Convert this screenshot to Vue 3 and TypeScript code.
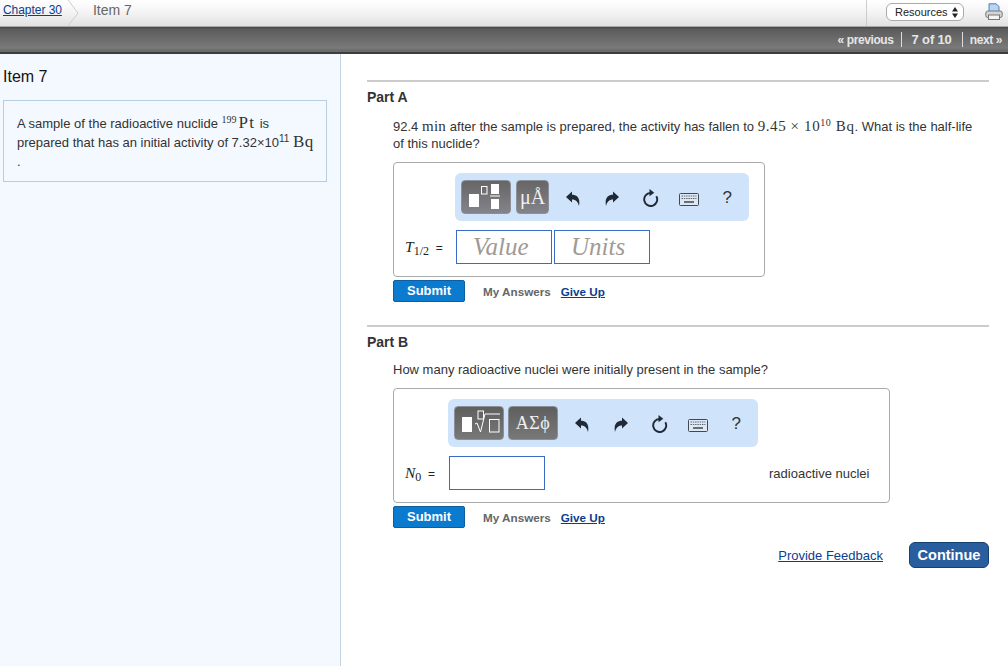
<script setup lang="ts">
const undoPath = 'M0 6 L6 0.5 V3.8 C11 3.8 14.5 7 13 15 C12 11 10 8.5 6 8.5 V11.5 Z'
const redoPath = 'M14 6 L8 0.5 V3.8 C3 3.8 -0.5 7 1 15 C2 11 4 8.5 8 8.5 V11.5 Z'
</script>

<template>
  <div class="page">
    <header class="topbar">
      <nav class="crumbs">
        <a class="chapter" href="#">Chapter 30</a>
        <svg class="chevron" width="13" height="27" viewBox="0 0 13 27"><path d="M1 0 L11 13 L1 26" fill="none" stroke="#cfcfcf" /></svg>
        <span class="crumb-item">Item 7</span>
      </nav>
      <div class="tools">
        <div class="select">
          <span>Resources</span>
          <svg width="6" height="11" viewBox="0 0 6 11"><path d="M3 0 L6 4.5 H0 Z M3 11 L0 6.5 H6 Z" fill="#222" /></svg>
        </div>
        <svg class="printer" width="18" height="18" viewBox="0 0 18 18">
          <path d="M4 9 V0.8 H11 L14 3.5 V9 Z" fill="#b9d4f5" stroke="#4f80ba" />
          <rect x="0.8" y="8" width="16.4" height="6.5" rx="2" fill="#d4d4d4" stroke="#777" />
          <rect x="3.5" y="12" width="11" height="4.5" fill="#f4f4f4" stroke="#777" />
        </svg>
      </div>
    </header>

    <div class="darkbar">
      <span>« previous</span>
      <i class="pipe"></i>
      <span class="count">7 of 10</span>
      <i class="pipe"></i>
      <span>next »</span>
    </div>

    <div class="body">
      <aside class="sidebar">
        <h1>Item 7</h1>
        <div class="intro">
          A sample of the radioactive nuclide <sup class="iso">199</sup><span class="m big pt">Pt</span> is<br />
          prepared that has an initial activity of 7.32×10<sup class="exp">11</sup> <span class="m big">Bq</span><br />
          .
        </div>
      </aside>

      <main class="content">
        <section class="part part-a">
          <h2>Part A</h2>
          <p class="q">
            92.4 <span class="m">min</span> after the sample is prepared, the activity has fallen to
            <span class="m wide-math">9.45 × 10<sup class="mexp">10</sup> Bq</span>. What is the half-life of this nuclide?
          </p>
          <div class="answer answer-a">
            <div class="toolbar tb-a">
              <div class="tb-btn wide">
                <svg width="48" height="32" viewBox="0 0 48 32">
                  <rect x="7" y="13" width="10" height="13" fill="#fff" />
                  <rect x="19.5" y="5.5" width="5.5" height="7.5" fill="none" stroke="#fff" />
                  <rect x="29" y="3" width="8" height="10" fill="#fff" />
                  <rect x="28" y="14.5" width="10" height="1" fill="#fff" />
                  <rect x="29" y="18" width="8" height="10" fill="#fff" />
                </svg>
              </div>
              <div class="tb-btn narrow glyph">μÅ</div>
              <div class="icons">
                <svg class="ico" width="14" height="15" viewBox="0 0 14 15"><path :d="undoPath" fill="#1f2a36" /></svg>
                <svg class="ico" width="14" height="15" viewBox="0 0 14 15"><path :d="redoPath" fill="#1f2a36" /></svg>
                <svg class="ico" width="17" height="18" viewBox="0 0 17 18">
                  <path d="M8.5 4 A6.5 6.5 0 1 0 14.3 7.2" fill="none" stroke="#1f2a36" stroke-width="1.9" />
                  <path d="M7.5 0 L12.3 3.8 L7.5 7.2 Z" fill="#1f2a36" />
                </svg>
                <svg class="ico kbd" width="20" height="13" viewBox="0 0 20 13">
                  <rect x="0.5" y="0.5" width="19" height="12" rx="1" fill="#dfe8f2" stroke="#3d4955" />
                  <path d="M2.5 3 H17.5 M2.5 5.5 H17.5" stroke="#5f6b79" stroke-dasharray="1.5 .8" />
                  <path d="M5 9 H15" stroke="#3d4955" stroke-width="1.5" />
                </svg>
                <span class="help">?</span>
              </div>
            </div>
            <div class="row row-a">
              <span class="label"><span class="var">T</span><sub>1/2</sub> <b>=</b></span>
              <div class="input ph first"><em>Value</em></div>
              <div class="input ph gap2"><em>Units</em></div>
            </div>
          </div>
          <div class="actions">
            <button class="submit" type="button">Submit</button>
            <span class="mine">My Answers</span>
            <a class="giveup" href="#">Give Up</a>
          </div>
        </section>

        <section class="part part-b">
          <h2>Part B</h2>
          <p class="q qb">How many radioactive nuclei were initially present in the sample?</p>
          <div class="answer answer-b">
            <div class="toolbar tb-b">
              <div class="tb-btn wide">
                <svg width="48" height="32" viewBox="0 0 48 32">
                  <rect x="7" y="10" width="10" height="15" fill="#fff" />
                  <rect x="23" y="4" width="5.5" height="8" fill="none" stroke="#fff" />
                  <path d="M20 17 L22 16 L25.5 25 L30 7 H45" fill="none" stroke="#fff" stroke-width="1" />
                  <rect x="34.5" y="12.5" width="9.5" height="12.5" fill="none" stroke="#fff" />
                </svg>
              </div>
              <div class="tb-btn wide glyph greek">ΑΣϕ</div>
              <div class="icons">
                <svg class="ico" width="14" height="15" viewBox="0 0 14 15"><path :d="undoPath" fill="#1f2a36" /></svg>
                <svg class="ico" width="14" height="15" viewBox="0 0 14 15"><path :d="redoPath" fill="#1f2a36" /></svg>
                <svg class="ico" width="17" height="18" viewBox="0 0 17 18">
                  <path d="M8.5 4 A6.5 6.5 0 1 0 14.3 7.2" fill="none" stroke="#1f2a36" stroke-width="1.9" />
                  <path d="M7.5 0 L12.3 3.8 L7.5 7.2 Z" fill="#1f2a36" />
                </svg>
                <svg class="ico kbd" width="20" height="13" viewBox="0 0 20 13">
                  <rect x="0.5" y="0.5" width="19" height="12" rx="1" fill="#dfe8f2" stroke="#3d4955" />
                  <path d="M2.5 3 H17.5 M2.5 5.5 H17.5" stroke="#5f6b79" stroke-dasharray="1.5 .8" />
                  <path d="M5 9 H15" stroke="#3d4955" stroke-width="1.5" />
                </svg>
                <span class="help">?</span>
              </div>
            </div>
            <div class="row row-b">
              <span class="label"><span class="var">N</span><sub>0</sub> <b>=</b></span>
              <div class="input"></div>
              <span class="unit">radioactive nuclei</span>
            </div>
          </div>
          <div class="actions">
            <button class="submit" type="button">Submit</button>
            <span class="mine">My Answers</span>
            <a class="giveup" href="#">Give Up</a>
          </div>
        </section>

        <footer class="foot">
          <a href="#" class="feedback">Provide Feedback</a>
          <button class="continue" type="button">Continue</button>
        </footer>
      </main>
    </div>
  </div>
</template>

<style>
html, body { margin: 0; background: #fff; overflow: hidden; }
</style>

<style scoped>
.page { width: 1008px; height: 666px; display: flex; flex-direction: column; font-family: "Liberation Sans", Arial, sans-serif; color: #333; overflow: hidden; }
.topbar { height: 27px; flex: none; display: flex; justify-content: space-between; box-sizing: border-box; background: linear-gradient(#fff 0%, #f6f6f6 40%, #e2e2e2 100%); border-bottom: 1px solid #aaa; }
.crumbs { display: flex; align-items: center; height: 26px; }
.chapter { margin-left: 3px; font-size: 12px; letter-spacing: -0.05px; color: #0b3d91; margin-top: -6px; }
.chevron { margin-left: 5px; flex: none; }
.crumb-item { margin-left: 13px; font-size: 14px; color: #666; margin-top: -6px; }
.tools { width: 142px; box-sizing: border-box; border-left: 1px solid #ccc; display: flex; align-items: flex-start; padding: 3px 0 0 19px; }
.select { box-sizing: border-box; width: 78px; height: 18px; border: 1px solid #aaa; border-radius: 6px; background: #fff; display: flex; align-items: center; justify-content: space-between; padding: 0 5px 0 8px; font-size: 11px; color: #222; }
.printer { margin-left: 21px; margin-top: 0; }
.darkbar { height: 27px; flex: none; box-sizing: border-box; display: flex; justify-content: flex-end; align-items: center; padding: 0 6px 0 0; color: #e6e6e6; font-size: 12px; font-weight: bold; letter-spacing: -0.4px; background: linear-gradient(#474747 0, #5c5c5c 10%, #7a7a7a 85%, #6b6b6b 92%); border-bottom: 2px solid #3d3d3d; }
.count { font-size: 13px; margin: 0 10px; letter-spacing: -0.15px; }
.pipe { width: 1px; height: 15px; background: #ddd; margin-left: 7px; }
.pipe + .count + .pipe { margin-left: 0; margin-right: 7px; }
.body { flex: 1; display: flex; min-height: 0; }
.sidebar { width: 341px; flex: none; box-sizing: border-box; background: #f4f9ff; border-right: 1px solid #c4d3e2; padding: 13px 13px 0 3px; }
h1 { margin: 0 0 14px; font-size: 16px; line-height: 19px; font-weight: normal; color: #111; }
.intro { box-sizing: border-box; width: 324px; height: 82px; border: 1px solid #b8cde0; padding: 13px 10px 0 13px; font-size: 13px; line-height: 19px; color: #333; }
.m { font-family: "Liberation Serif", "DejaVu Serif", serif; font-size: 15px; line-height: 0; letter-spacing: 0.3px; }
.big { font-size: 17px; letter-spacing: 0.5px; }
.pt { letter-spacing: 1.2px; margin-left: 1px; margin-right: 1px; }
.wide-math { letter-spacing: 0.6px; }
sup { line-height: 0; }
.iso { font-family: "Liberation Serif", serif; font-size: 10px; vertical-align: 5px; margin-right: 1px; }
.exp { font-size: 10px; vertical-align: 5px; }
.mexp { font-size: 10px; vertical-align: 5px; }
.content { flex: 1; min-width: 0; padding: 0 19px 0 26px; }
.part { border-top: 2px solid #ccc; }
.part-a { margin-top: 26px; }
.part-b { margin-top: 23px; }
h2 { margin: 0; padding-top: 7px; font-size: 14px; line-height: 16px; font-weight: bold; color: #333; }
.q { margin: 13px 0 0 26px; font-size: 13px; line-height: 17px; width: 586px; color: #333; }
.qb { margin-top: 11px; line-height: 18px; }
.answer { box-sizing: border-box; margin: 10px 0 0 26px; border: 1px solid #aaa; border-radius: 4px; background: #fff; }
.answer-a { width: 372px; height: 115px; padding: 10px 0 0 61px; margin-top: 10px; }
.answer-b { width: 497px; height: 115px; padding: 10px 0 0 54px; margin-top: 9px; }
.toolbar { box-sizing: border-box; height: 48px; display: flex; align-items: center; padding: 0 6px; background: #cfe3fb; border-radius: 6px; }
.tb-a { width: 294px; }
.tb-b { width: 310px; }
.tb-btn { box-sizing: border-box; height: 34px; display: flex; align-items: center; justify-content: center; border-radius: 4px; background: linear-gradient(#666, #83838b); border: 1px solid #8d9097; color: #fff; flex: none; }
.wide { width: 50px; margin-right: 5px; }
.narrow { width: 33px; }
.tb-b .wide { margin-right: 4px; }
.tb-b .greek { margin-right: 0; }
.glyph { font-family: "Liberation Serif", serif; font-size: 20px; color: #f0f0f0; }
.greek { font-size: 18px; letter-spacing: 0.5px; }
.tb-b .tb-btn { background: linear-gradient(#5f5f5f, #787878); }
.icons { display: grid; grid-template-columns: repeat(5, 38.5px); justify-items: center; align-items: center; margin-left: 5px; padding-top: 2px; }
.ico { display: block; }
.kbd { margin-top: 2px; }
.help { font-size: 17px; color: #333; line-height: 18px; margin-top: -1px; }
.row { display: flex; align-items: center; }
.row-a { margin: 9px 0 0 -50px; }
.row-b { margin: 9px 0 0 -43px; }
.label { font-family: "Liberation Serif", serif; font-size: 15px; color: #222; white-space: nowrap; flex: none; }
.row-a .label { width: 51px; }
.row-b .label { width: 44px; }
.var { font-style: italic; font-size: 15.5px; }
.label sub { font-size: 12px; line-height: 0; vertical-align: -3px; }
.label b { font-family: "Liberation Sans", sans-serif; font-weight: normal; font-size: 12px; margin-left: 3px; }
.input { box-sizing: border-box; width: 96px; height: 34px; border: 1px solid #3a6cc4; background: #fff; flex: none; }
.ph em { display: block; font-family: "Liberation Serif", serif; font-style: italic; color: #9f9a94; font-size: 25px; line-height: 31px; padding-left: 16px; }
.gap2 { margin-left: 2px; }
.unit { margin-left: 224px; font-size: 13px; color: #333; }
.actions { display: flex; align-items: center; margin: 3px 0 0 26px; height: 22px; }
.submit { box-sizing: border-box; width: 72px; height: 22px; padding: 0 0 2px; border: 1px solid #0f5f9f; border-radius: 2px; background: #0b7bd0; color: #fff; font: bold 13px "Liberation Sans", sans-serif; }
.mine { margin-left: 18px; font-size: 11.7px; font-weight: bold; color: #666; }
.giveup { margin-left: 10px; font-size: 11.7px; font-weight: bold; color: #0b3d91; }
.foot { display: flex; justify-content: flex-end; align-items: center; margin-top: 14px; }
.feedback { font-size: 13px; color: #0b3d91; margin-right: 26px; }
.continue { box-sizing: border-box; width: 80px; height: 26px; padding: 0; border: 1px solid #16406f; border-radius: 6px; background: #2a5d9e; color: #fff; font: bold 14.5px "Liberation Sans", sans-serif; }
</style>
